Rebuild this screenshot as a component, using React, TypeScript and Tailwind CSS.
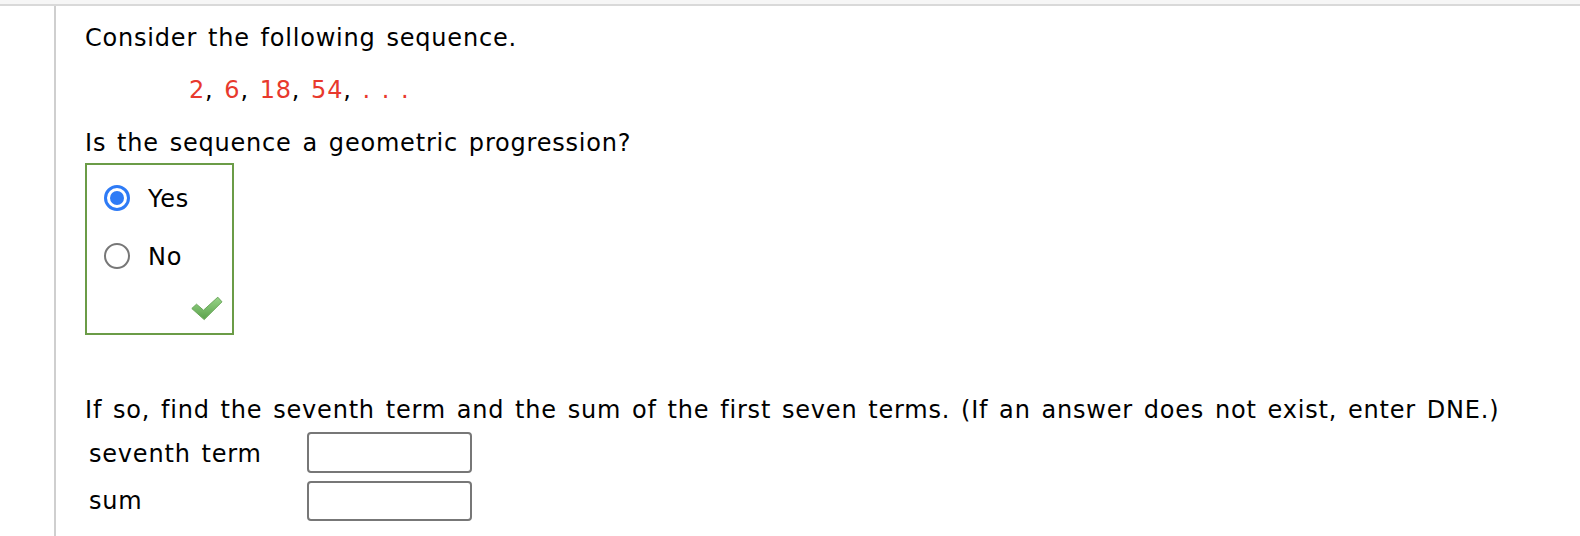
import React from "react";

const font = { fontFamily: '"DejaVu Sans", Verdana, sans-serif' };

function Check() {
  return (
    <svg width="32" height="25" viewBox="0 0 32 25">
      <defs>
        <linearGradient id="g" x1="0" y1="0" x2="0" y2="1">
          <stop offset="0" stopColor="#8fd17e" />
          <stop offset="1" stopColor="#4d9a3d" />
        </linearGradient>
      </defs>
      <path
        d="M0.8 12.5 L5.5 8.2 L12.5 14.2 L26.8 1.2 L31 5.8 L13.2 23.6 Z"
        fill="url(#g)"
        stroke="#5d9f4c"
        strokeWidth="1"
        strokeLinejoin="round"
        opacity="0.92"
      />
    </svg>
  );
}

function Radio({ checked }: { checked: boolean }) {
  if (checked) {
    return (
      <span className="flex h-[26px] w-[26px] shrink-0 items-center justify-center rounded-full border-[3px] border-[#2e7bf6] bg-white">
        <span className="block h-[14px] w-[14px] rounded-full bg-[#2e7bf6]" />
      </span>
    );
  }
  return <span className="block h-[26px] w-[26px] shrink-0 rounded-full border-2 border-[#777777] bg-white" />;
}

export default function App() {
  return (
    <div className="min-h-[536px] w-[1580px] bg-white text-black" style={font}>
      <div className="h-[4px] bg-[#f6f6f6]" />
      <div className="h-[2px] bg-[#d9d9d9]" />
      <div className="flex">
        <div className="w-[54px] shrink-0" />
        <div className="h-[530px] w-[2px] shrink-0 bg-[#cfcfcf]" />
        <div className="flex flex-col pl-[29px] text-[24px] leading-[29px] tracking-[0.8px] [word-spacing:2.4px]">
          <div className="mt-[18px]">Consider the following sequence.</div>
          <div className="mt-[23px] pl-[104px] text-[#e8392d]">
            2<span className="text-black">,</span> 6<span className="text-black">,</span> 18<span className="text-black">,</span> 54<span className="text-black">,</span> . . .
          </div>
          <div className="mt-[24px]">Is the sequence a geometric progression?</div>
          <div className="mt-[5px] flex h-[172px] w-[149px] flex-col border-2 border-[#6b9c47] pl-[17px] pt-[20px]">
            <div className="flex items-start">
              <Radio checked />
              <span className="ml-[18px]">Yes</span>
            </div>
            <div className="mt-[29px] flex items-start">
              <Radio checked={false} />
              <span className="ml-[18px]">No</span>
            </div>
            <div className="ml-[87px] mt-[24px] flex">
              <Check />
            </div>
          </div>
          <div className="mt-[61px]">
            If so, find the seventh term and the sum of the first seven terms. (If an answer does not exist, enter DNE.)
          </div>
          <div className="mt-[7px] flex items-center pl-[4px]">
            <span className="w-[218px] pt-[3px]">seventh term</span>
            <span className="block h-[41px] w-[165px] rounded-[4px] border-2 border-[#777777]" />
          </div>
          <div className="mt-[8px] flex items-center pl-[4px]">
            <span className="w-[218px] pt-[1px]">sum</span>
            <span className="block h-[40px] w-[165px] rounded-[4px] border-2 border-[#777777]" />
          </div>
        </div>
      </div>
    </div>
  );
}
